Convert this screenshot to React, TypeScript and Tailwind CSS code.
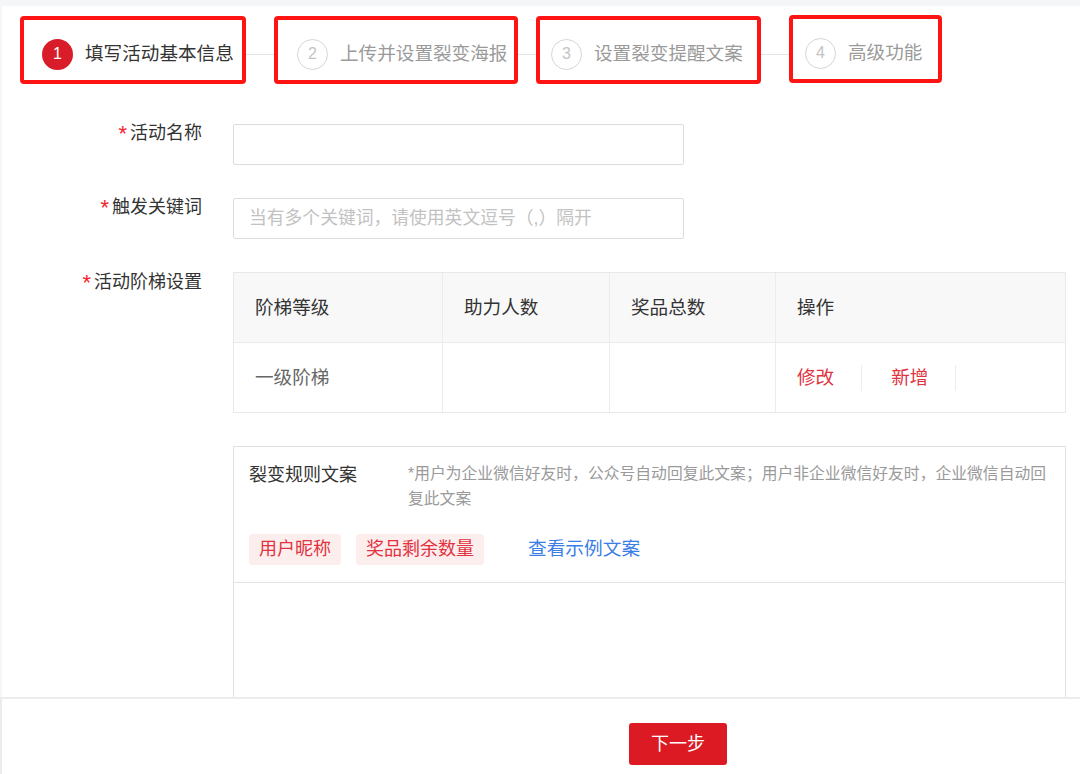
import React from 'react';

const font = "font-['Liberation_Sans','Noto_Sans_CJK_SC',sans-serif]";

type Step = { no: number; title: string; active?: boolean; box: string };

const steps: Step[] = [
  { no: 1, title: '填写活动基本信息', active: true, box: 'w-[226px] pl-[18px]' },
  { no: 2, title: '上传并设置裂变海报', box: 'w-[244px] pl-[19px]' },
  { no: 3, title: '设置裂变提醒文案', box: 'w-[225px] pl-[11px]' },
  { no: 4, title: '高级功能', box: 'w-[153px] pl-[12px] -mt-[2px]' },
];

const connectors = ['w-[28px]', 'w-[18px]', 'w-[28px]'];

const StepItem: React.FC<{ step: Step }> = ({ step }) => (
  <div
    className={`h-[68px] pt-[8px] flex items-center border-4 border-[#ff1414] rounded-[4px] ${step.box}`}
  >
    {step.active ? (
      <span className="w-[31px] h-[31px] rounded-full bg-[#d91c2a] text-white text-[16px] flex items-center justify-center">
        {step.no}
      </span>
    ) : (
      <span className="w-[31px] h-[31px] rounded-full border border-[#d6d6d6] text-[#c4c4c4] text-[16px] flex items-center justify-center">
        {step.no}
      </span>
    )}
    <span
      className={`ml-[12px] text-[18.6px] whitespace-nowrap ${
        step.active ? 'text-[#333]' : 'text-[#9a9a9a]'
      }`}
    >
      {step.title}
    </span>
  </div>
);

const Label: React.FC<{ text: string }> = ({ text }) => (
  <div className="w-[200px] shrink-0 text-right leading-[24px] text-[18px] text-[#333]">
    <span className="text-[#f5222d] text-[22px] mr-[3px] align-[-2px]">*</span>
    {text}
  </div>
);

const App: React.FC = () => {
  return (
    <div className={`w-[1080px] h-[774px] bg-[#f5f6f7] flex flex-col overflow-hidden ${font}`}>
      <div className="h-[6px] shrink-0" />

      <div className="flex-1 ml-[2px] bg-white overflow-hidden">
        {/* wizard steps */}
        <div className="flex items-center mt-[10px] ml-[18px]">
          {steps.map((s, i) => (
            <React.Fragment key={s.no}>
              <StepItem step={s} />
              {i < connectors.length && (
                <div className={`h-px mt-[8px] bg-[#e4e4e4] ${connectors[i]}`} />
              )}
            </React.Fragment>
          ))}
        </div>

        {/* form */}
        <div className="mt-[37px] flex flex-col">
          <div className="flex items-start">
            <Label text="活动名称" />
            <input
              className="ml-[31px] mt-[3px] w-[451px] h-[41px] border border-[#dcdcdc] rounded-[2px] outline-none px-[15px] text-[16px]"
              readOnly
            />
          </div>

          <div className="flex items-start mt-[30px]">
            <Label text="触发关键词" />
            <input
              className="ml-[31px] mt-[3px] w-[451px] h-[41px] border border-[#dcdcdc] rounded-[2px] outline-none px-[15px] text-[17.8px] placeholder:text-[#c2c2c2]"
              placeholder="当有多个关键词，请使用英文逗号（,）隔开"
              readOnly
            />
          </div>

          <div className="flex items-start mt-[31px]">
            <Label text="活动阶梯设置" />
            <div className="ml-[31px] mt-[2px] w-[833px] flex flex-col">
              {/* ladder table */}
              <div className="border border-[#e8e8e8] text-[18.6px]">
                <div className="h-[70px] bg-[#f8f8f8] flex text-[#333] border-b border-[#ececec]">
                  <div className="w-[209px] pl-[21px] flex items-center border-r border-[#ececec]">阶梯等级</div>
                  <div className="w-[167px] pl-[21px] flex items-center border-r border-[#ececec]">助力人数</div>
                  <div className="w-[166px] pl-[21px] flex items-center border-r border-[#ececec]">奖品总数</div>
                  <div className="flex-1 pl-[21px] flex items-center">操作</div>
                </div>
                <div className="h-[69px] flex text-[#666]">
                  <div className="w-[209px] pl-[21px] flex items-center border-r border-[#ececec]">一级阶梯</div>
                  <div className="w-[167px] border-r border-[#ececec]" />
                  <div className="w-[166px] border-r border-[#ececec]" />
                  <div className="flex-1 pl-[21px] flex items-center text-[#e0333f]">
                    <span>修改</span>
                    <span className="w-px h-[26px] bg-[#ededed] ml-[27px] mr-[29px]" />
                    <span>新增</span>
                    <span className="w-px h-[26px] bg-[#ededed] ml-[27px]" />
                  </div>
                </div>
              </div>

              {/* share rule copy */}
              <div className="mt-[33px] border border-[#e2e2e2] h-[300px] flex flex-col">
                <div className="pl-[15px] pr-[14px] pt-[14px] pb-[17px] border-b border-[#e4e4e4]">
                  <div className="flex">
                    <div className="w-[159px] shrink-0 text-[18px] text-[#333] leading-[28px]">裂变规则文案</div>
                    <div className="text-[15.8px] text-[#9a9a9a] leading-[25px]">
                      *用户为企业微信好友时，公众号自动回复此文案；用户非企业微信好友时，企业微信自动回复此文案
                    </div>
                  </div>
                  <div className="flex items-center mt-[23px] text-[18px]">
                    <span className="h-[31px] px-[10px] flex items-center rounded-[3px] bg-[#fdeeee] text-[#e0333f]">用户昵称</span>
                    <span className="ml-[15px] h-[31px] px-[10px] flex items-center rounded-[3px] bg-[#fdeeee] text-[#e0333f]">奖品剩余数量</span>
                    <span className="ml-[44px] text-[18.7px] text-[#3a7ee6]">查看示例文案</span>
                  </div>
                </div>
                <div className="flex-1" />
              </div>
            </div>
          </div>
        </div>
      </div>

      {/* footer actions */}
      <div className="h-[77px] shrink-0 bg-white border-t-2 border-l-2 border-[#ececec] flex items-start">
        <button className="ml-[627px] mt-[24px] w-[98px] h-[42px] rounded-[3px] bg-[#dc1a24] text-white text-[18px]">
          下一步
        </button>
      </div>
    </div>
  );
};

export default App;
